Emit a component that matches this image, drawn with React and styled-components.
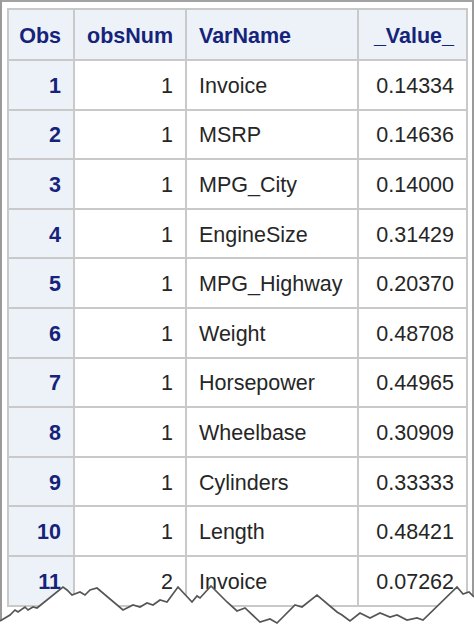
import React from "react";
import styled, { createGlobalStyle } from "styled-components";

const rows = [
  [1, 1, "Invoice", "0.14334"],
  [2, 1, "MSRP", "0.14636"],
  [3, 1, "MPG_City", "0.14000"],
  [4, 1, "EngineSize", "0.31429"],
  [5, 1, "MPG_Highway", "0.20370"],
  [6, 1, "Weight", "0.48708"],
  [7, 1, "Horsepower", "0.44965"],
  [8, 1, "Wheelbase", "0.30909"],
  [9, 1, "Cylinders", "0.33333"],
  [10, 1, "Length", "0.48421"],
  [11, 2, "Invoice", "0.07262"],
];

// torn paper edge along the bottom of the screenshot
const tear = [
  [0, 621], [10, 615], [15, 610], [18, 612], [25, 607], [28, 610], [33, 607],
  [37, 608], [63, 587], [67, 590], [72, 595], [80, 592], [85, 595], [90, 590],
  [97, 588], [123, 610], [133, 605], [140, 607], [147, 603], [153, 605],
  [160, 600], [167, 602], [178, 587], [192, 602], [197, 596], [200, 598],
  [211, 586], [227, 602], [237, 611], [245, 608], [260, 622], [270, 619],
  [277, 623], [295, 605], [302, 607], [317, 595], [337, 612], [342, 615],
  [350, 621], [360, 613], [370, 618], [380, 613], [390, 617], [397, 615],
  [407, 620], [417, 618], [423, 620], [457, 587], [463, 594], [469, 592],
  [474, 597],
];

const GlobalStyle = createGlobalStyle`
  html, body {
    margin: 0;
    background: #ffffff;
  }
`;

const Page = styled.div`
  position: relative;
  width: 474px;
  height: 632px;
  overflow: hidden;
  background: #ffffff;
`;

const Frame = styled.div`
  box-sizing: border-box;
  height: 100%;
  border-top: 2px solid #a2a2a2;
  border-left: 2px solid #9a9a9a;
  border-right: 2px solid #9a9a9a;
  padding: 6px 4px 0 5px;
`;

const Grid = styled.div`
  display: grid;
  grid-template-columns: 64px 110px 170px 107px;
  grid-template-rows: 49px;
  grid-auto-rows: 47.6px;
  gap: 2px;
  border: 2px solid #c9c9c9;
  background: #c9c9c9;
  width: 461px;
  box-sizing: border-box;
  font-family: "Liberation Sans", Arial, sans-serif;
  font-size: 21.5px;
`;

const Cell = styled.div`
  display: flex;
  align-items: center;
  justify-content: ${(p) => (p.$align === "right" ? "flex-end" : "flex-start")};
  padding: 3px 12px 0;
  background: ${(p) => (p.$head ? "#edf2f9" : "#ffffff")};
  color: ${(p) => (p.$head ? "#16237a" : "#262626")};
  font-weight: ${(p) => (p.$head ? 700 : 400)};
  white-space: nowrap;
`;

const Tear = styled.svg`
  position: absolute;
  left: 0;
  top: 0;
  pointer-events: none;
`;

const App = () => {
  const line = tear.map((p) => p.join(",")).join(" ");
  return (
    <Page>
      <GlobalStyle />
      <Frame>
        <Grid>
          <Cell $head $align="right">Obs</Cell>
          <Cell $head $align="right">obsNum</Cell>
          <Cell $head>VarName</Cell>
          <Cell $head $align="right">_Value_</Cell>
          {rows.map((r) => (
            <React.Fragment key={r[0]}>
              <Cell $head $align="right">{r[0]}</Cell>
              <Cell $align="right">{r[1]}</Cell>
              <Cell>{r[2]}</Cell>
              <Cell $align="right">{r[3]}</Cell>
            </React.Fragment>
          ))}
        </Grid>
      </Frame>
      <Tear width="474" height="632" viewBox="0 0 474 632">
        <polygon points={`${line} 474,632 0,632`} fill="#ffffff" />
        <polyline points={line} fill="none" stroke="#555555" strokeWidth="1.7" strokeLinejoin="miter" />
      </Tear>
    </Page>
  );
};

export default App;
